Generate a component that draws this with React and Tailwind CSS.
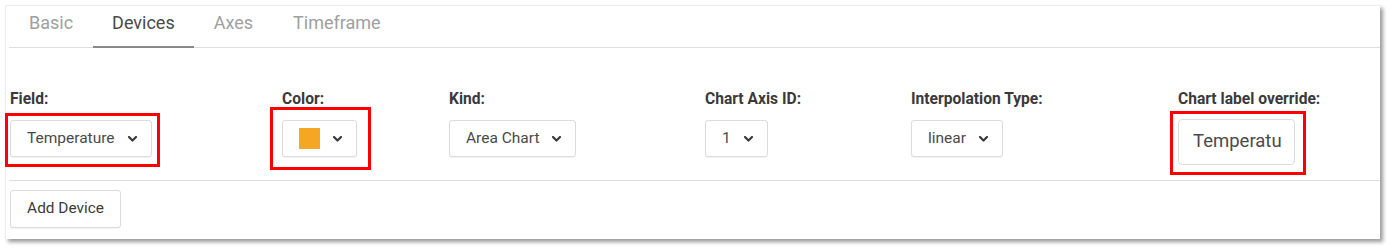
import React from "react";

const tabs = ["Basic", "Devices", "Axes", "Timeframe"];

function Chevron() {
  return (
    <svg width="9" height="6" viewBox="0 0 9 6" className="shrink-0">
      <path d="M1 1 L4.5 4.5 L8 1" fill="none" stroke="#3a3a3a" strokeWidth="2.2" strokeLinecap="round" strokeLinejoin="round" />
    </svg>
  );
}

function Select({ children }) {
  return (
    <div className="inline-flex h-[37px] items-center gap-[13px] rounded-[3px] border border-[#dcdcdc] bg-white pl-[16px] pr-[14px] text-[15.5px] text-[#4a4a4a] shadow-[0_1px_1px_rgba(0,0,0,0.05)]">
      {children}
      <Chevron />
    </div>
  );
}

function Label({ children }) {
  return <div className="h-[20px] text-[15.6px] font-bold leading-[20px] text-[#3a3a3a]">{children}</div>;
}

function Field({ label, children }) {
  return (
    <div className="flex flex-col items-start">
      <Label>{label}</Label>
      <div className="mt-[11px]">{children}</div>
    </div>
  );
}

export default function App() {
  return (
    <div className="h-[248px] w-[1389px] bg-white pl-[5px] pt-[5px] font-['Roboto',sans-serif]">
      <div className="flex h-[234px] w-[1375px] flex-col border-l border-t border-[#eeeeee] bg-white pl-[3px] shadow-[3px_3px_4px_rgba(0,0,0,0.4)]">
        {/* Tabs */}
        <div className="flex h-[42px] border-b border-[#dddddd]">
          {tabs.map((t) => (
            <div
              key={t}
              className={
                t === "Devices"
                  ? "-mb-px border-b-2 border-[#8a8a8a] px-[19px] pt-[5px] text-[18px] leading-[24px] text-[#4a4a4a]"
                  : "px-[20px] pt-[5px] text-[18px] leading-[24px] text-[#a0a0a0]"
              }
            >
              {t}
            </div>
          ))}
        </div>

        {/* Device row */}
        <div className="grid grid-cols-[272px_167px_256px_206px_267px_1fr] items-start pb-[15px] pl-[1px] pt-[41px]">
          <Field label="Field:">
            <div className="relative">
              <Select>Temperature</Select>
              <div className="pointer-events-none absolute -bottom-[10px] -left-[5px] -right-[8px] -top-[7px] border-[3px] border-[#ff0000]" />
            </div>
          </Field>
          <Field label="Color:">
            <div className="relative">
              <Select>
                <span className="block h-[21px] w-[21px] bg-[#f5a623]" />
              </Select>
              <div className="pointer-events-none absolute -bottom-[13px] -left-[12px] -right-[14px] -top-[13px] border-[3px] border-[#ff0000]" />
            </div>
          </Field>
          <Field label="Kind:">
            <Select>Area Chart</Select>
          </Field>
          <Field label="Chart Axis ID:">
            <Select>1</Select>
          </Field>
          <Field label="Interpolation Type:">
            <Select>linear</Select>
          </Field>
          <div className="flex flex-col items-start">
            <Label>Chart label override:</Label>
            <div className="relative mt-[10px]">
              <div className="flex h-[46px] w-[117px] items-center overflow-hidden whitespace-nowrap rounded-[4px] border border-[#dcdcdc] pl-[14px] text-[18.5px] text-[#4a4a4a]">
                Temperatu
              </div>
              <div className="pointer-events-none absolute -bottom-[10px] -left-[8px] -right-[11px] -top-[8px] border-[3px] border-[#ff0000]" />
            </div>
          </div>
        </div>

        {/* Footer */}
        <div className="border-t border-[#dddddd] pl-[1px] pt-[9px]">
          <button className="h-[38px] w-[111px] rounded-[3px] border border-[#dcdcdc] bg-white text-[15.4px] text-[#3a3a3a] shadow-[0_1px_1px_rgba(0,0,0,0.05)]">
            Add Device
          </button>
        </div>
      </div>
    </div>
  );
}
